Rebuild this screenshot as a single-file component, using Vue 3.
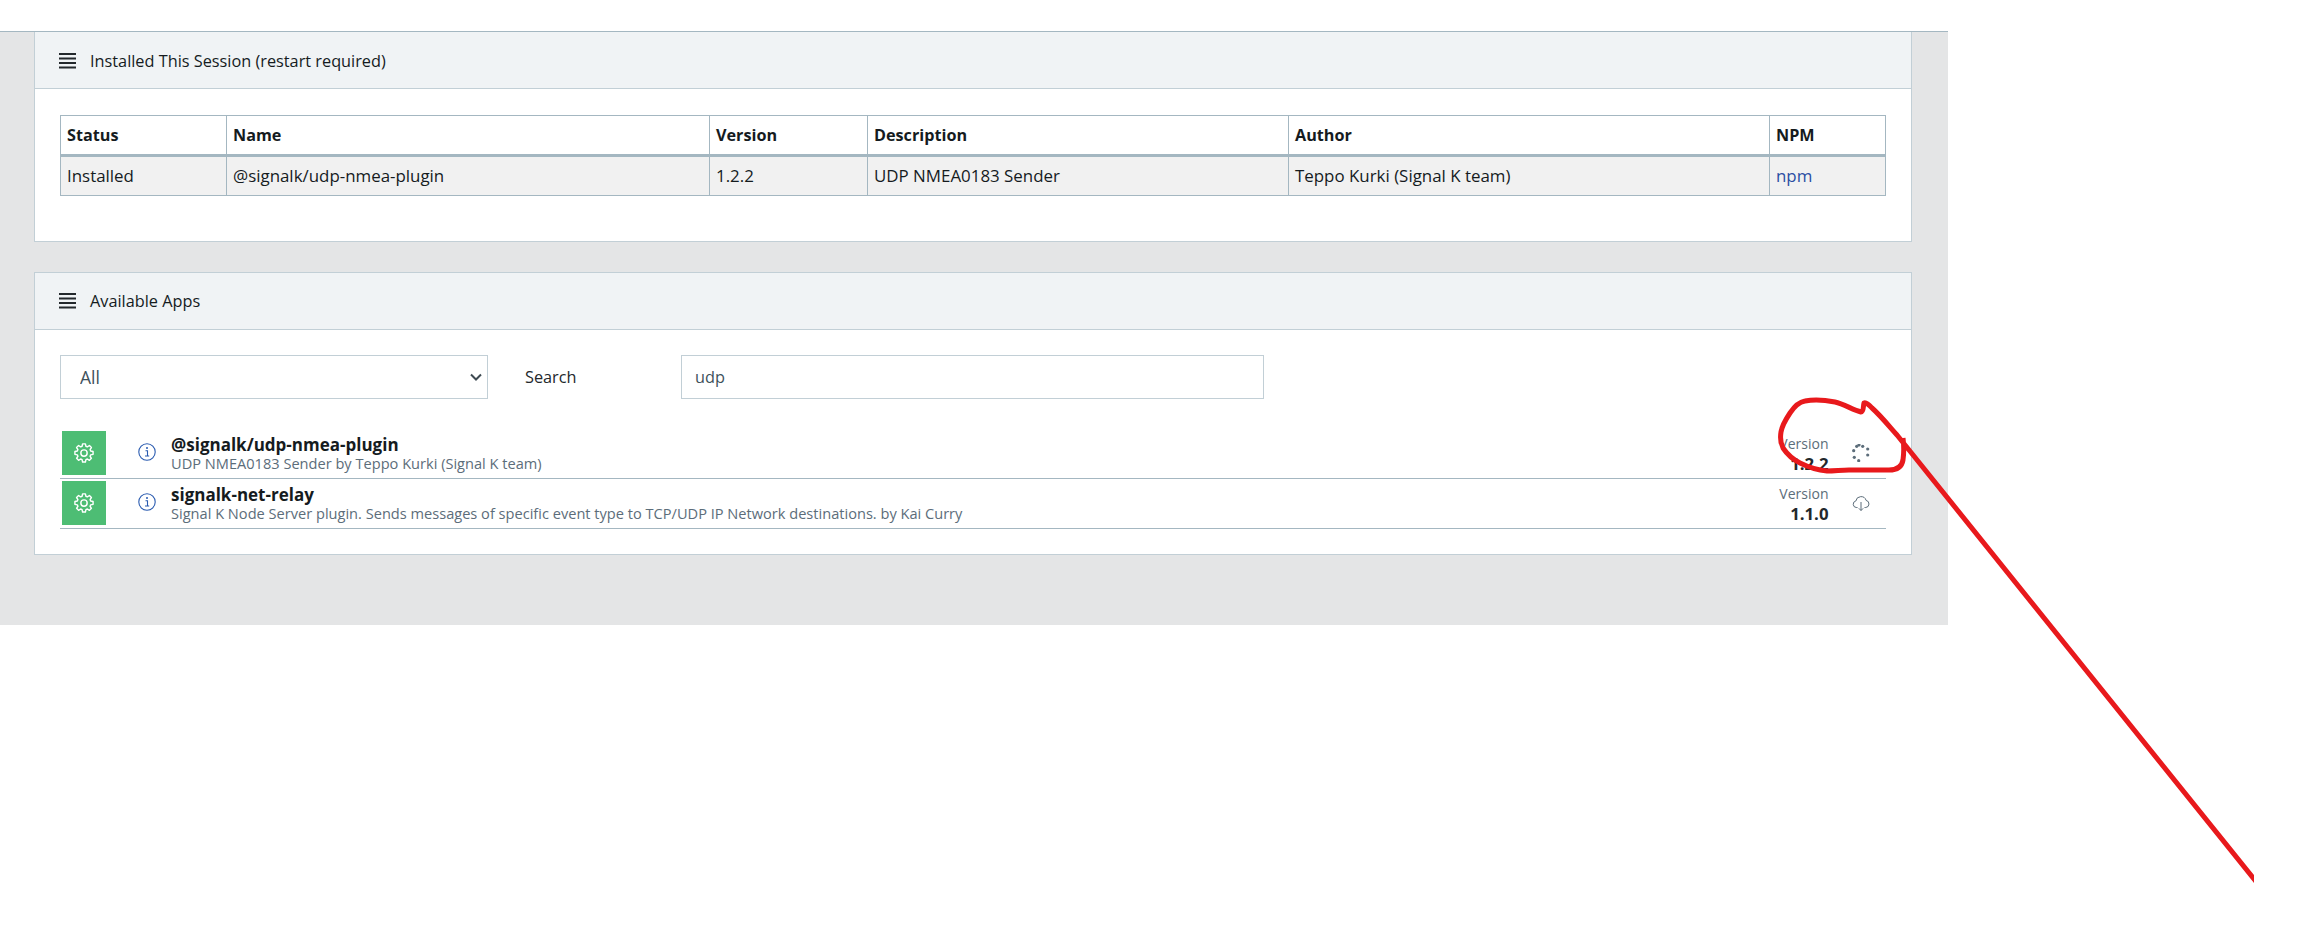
<script setup>
const columns = [
  { label: 'Status', width: 166, value: 'Installed' },
  { label: 'Name', width: 483, value: '@signalk/udp-nmea-plugin' },
  { label: 'Version', width: 158, value: '1.2.2' },
  { label: 'Description', width: 421, value: 'UDP NMEA0183 Sender' },
  { label: 'Author', width: 481, value: 'Teppo Kurki (Signal K team)' },
  { label: 'NPM', width: 116, value: 'npm', link: true }
]
const apps = [
  { name: '@signalk/udp-nmea-plugin', desc: 'UDP NMEA0183 Sender by Teppo Kurki (Signal K team)', version: '1.2.2', busy: true },
  { name: 'signalk-net-relay', desc: 'Signal K Node Server plugin. Sends messages of specific event type to TCP/UDP IP Network destinations. by Kai Curry', version: '1.1.0', busy: false }
]
const dots = [[10.7, 2.3], [7, 1], [4.7, 2.300], [1.7, 6.700], [2.300, 13.300], [6.700, 16.700], [15.700, 11], [15.700, 5]]
</script>

<template>
  <div class="page">
    <div class="topbar"></div>
    <main class="main">
      <section class="card first">
        <header class="card-head">
          <svg class="menu" viewBox="0 0 17 16"><path d="M0 1h17M0 5.500h17M0 10h17M0 14.500h17" /></svg>
          <span>Installed This Session (restart required)</span>
        </header>
        <div class="card-body body-table">
          <table class="table">
            <thead>
              <tr><th v-for="c in columns" :key="c.label" :style="{ width: c.width + 'px' }">{{ c.label }}</th></tr>
            </thead>
            <tbody>
              <tr><td v-for="c in columns" :key="c.label"><a v-if="c.link" class="link">{{ c.value }}</a><template v-else>{{ c.value }}</template></td></tr>
            </tbody>
          </table>
        </div>
      </section>

      <section class="card">
        <header class="card-head">
          <svg class="menu" viewBox="0 0 17 16"><path d="M0 1h17M0 5.500h17M0 10h17M0 14.500h17" /></svg>
          <span>Available Apps</span>
        </header>
        <div class="card-body body-apps">
          <div class="filters">
            <div class="select-wrap">
              <select class="field select"><option>All</option></select>
              <svg class="chev" viewBox="0 0 12 8"><path d="M1 1.500l5 5 5-5" /></svg>
            </div>
            <label class="search-label">Search</label>
            <input class="field input" value="udp" />
          </div>
          <div v-for="a in apps" :key="a.name" class="row">
            <div class="gear-box">
              <svg class="gear" viewBox="0 0 24 24"><path d="M10.300 1h3.400l.6 2.900 1.700.7 2.500-1.600 2.400 2.400-1.600 2.500.7 1.700 2.900.6v3.400l-2.900.6-.7 1.700 1.600 2.500-2.400 2.400-2.500-1.600-1.700.7-.6 2.900h-3.400l-.6-2.900-1.700-.7-2.500 1.600-2.400-2.400 1.600-2.500-.7-1.700-2.900-.6v-3.400l2.900-.6.7-1.700-1.600-2.500 2.400-2.400 2.500 1.600 1.700-.7z" /><circle cx="12" cy="12" r="3.800" /></svg>
            </div>
            <svg class="info" viewBox="0 0 18 18"><circle cx="9" cy="9" r="8.200" /><path d="M7.500 7.800h2v5M7 13h4.200" /><circle class="dot" cx="9" cy="5" r="1" /></svg>
            <div class="app-text">
              <div class="app-name">{{ a.name }}</div>
              <div class="app-desc">{{ a.desc }}</div>
            </div>
            <div class="ver">
              <div class="ver-label">Version</div>
              <div class="ver-num">{{ a.version }}</div>
            </div>
            <svg v-if="a.busy" class="action" viewBox="0 0 18 18"><circle v-for="(d, i) in dots" :key="i" :cx="d[0]" :cy="d[1]" r="1.600" /></svg>
            <svg v-else class="action cloud" viewBox="0 0 18 18"><path d="M5.500 13.500H4.200a3.300 3.300 0 0 1-.4-6.500 5.300 5.300 0 0 1 10.300-.6 3.600 3.600 0 0 1-.3 7.100h-1.300M9 8v8.500M6.800 14.300 9 16.500l2.200-2.200" /></svg>
          </div>
        </div>
      </section>
    </main>
    <svg class="scribble" width="2254" height="949" viewBox="0 0 2254 949">
      <path d="M1903 438c1 8 1 15 0 22-1 6-5 10-14 10h-40c-8 0-14 1-22 1-11-1-19-4-27-8-8-4-13-9-17-15-2-4-3-10-2-16 1-6 5-13 9-19 4-6 9-11 15-12 10-2 20-1 30 1 9 2 18 8 26 10 3 0 2-6 3-9 2-1 5 2 8 5 8 7 17 18 25 27L2262 889" />
    </svg>
  </div>
</template>

<style>
html, body { margin: 0; background: #fff; }
</style>

<style scoped>
.page { position: relative; width: 2314px; height: 949px; overflow: hidden; background: #fff; font-family: "Open Sans", "Noto Sans", sans-serif; color: #151b1e; font-size: 16.300px; }
.topbar { width: 1948px; height: 31px; border-bottom: 1.500px solid #a4b7c1; }
.main { width: 1948px; box-sizing: border-box; padding: 0 36px 70px 34px; background: #e4e5e6; }
.card { background: #fff; border: 1.500px solid #c2cfd6; box-sizing: border-box; margin-top: 30px; }
.card.first { margin-top: 0; border-top: 0; }
.card-head { height: 57px; box-sizing: border-box; display: flex; align-items: center; gap: 14px; padding-left: 24px; background: #f0f3f5; border-bottom: 1.500px solid #c2cfd6; font-size: 16.300px; }
.first .card-head { padding-top: 2px; }
.menu { width: 17px; height: 16px; stroke: #23282c; stroke-width: 2; fill: none; flex: none; }
.card-body { padding: 25px 25px 0; }
.body-table { height: 152px; box-sizing: border-box; padding-top: 26px; }
.body-apps { height: 224px; box-sizing: border-box; }
.table { border-collapse: collapse; table-layout: fixed; width: 1825px; font-size: 16.900px; }
.table th { height: 40px; padding: 0 6px; text-align: left; border: 1px solid #a4b7c1; border-bottom: 3px solid #a4b7c1; background: #fff; font-weight: 700; font-size: 16.200px; box-sizing: border-box; }
.table td { height: 40px; padding: 0 6px 2px; border: 1px solid #a4b7c1; background: #f1f1f1; box-sizing: border-box; }
.link { color: #2b4ea3; }
.filters { display: flex; align-items: center; margin-bottom: 30px; }
.select-wrap { position: relative; width: 428px; height: 44px; }
.field { box-sizing: border-box; height: 44px; border: 1.500px solid #c2cfd6; background: #fff; font: inherit; color: #3e515b; outline: 0; }
.select { width: 100%; padding-left: 19px; appearance: none; border-radius: 0; font-size: 17.500px; }
.chev { position: absolute; right: 6px; top: 18px; width: 12px; height: 8px; fill: none; stroke: #3e4a52; stroke-width: 2; }
.search-label { width: 156px; margin-left: 37px; color: #23282c; }
.input { width: 583px; padding-left: 13px; }
.row { display: flex; align-items: center; height: 50px; box-sizing: border-box; padding: 2px 0 3px 2px; border-bottom: 1.500px solid #a4b7c1; }
.gear-box { width: 44px; height: 44px; background: #4dbd74; display: flex; align-items: center; justify-content: center; flex: none; }
.gear { width: 20px; height: 20px; fill: none; stroke: #fff; stroke-width: 1.700; stroke-linejoin: round; }
.info { width: 18px; height: 18px; flex: none; margin: -2px 0 0 32px; fill: none; stroke: #2a5bb0; stroke-width: 1.100; }
.info .dot { fill: #2a5bb0; stroke: none; }
.app-text { flex: 1; margin-left: 15px; }
.app-name { font-weight: 700; font-size: 17px; line-height: 20px; color: #151b1e; }
.app-desc { font-size: 14.600px; line-height: 17px; color: #5c6d7a; }
.ver { text-align: right; margin-top: 1px; }
.ver-label { font-size: 14px; line-height: 20px; color: #5c6d7a; }
.ver-num { font-weight: 700; font-size: 16.800px; line-height: 20px; color: #23282c; }
.action { width: 18px; height: 18px; flex: none; margin: 0 16px 0 23.500px; fill: #5c6d7a; }
.cloud { fill: none; stroke: #5c6d7a; stroke-width: 1; }
.scribble { position: absolute; left: 0; top: 0; pointer-events: none; fill: none; stroke: #e8191c; stroke-width: 5; stroke-linejoin: round; stroke-linecap: butt; }
</style>
